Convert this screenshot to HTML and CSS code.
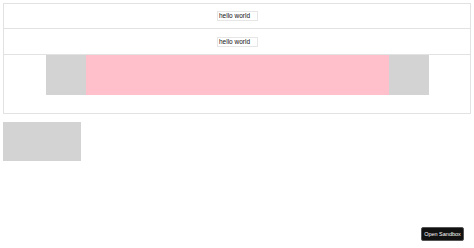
FILE: index.html
```html
<!DOCTYPE html>
<html>
<head>
<meta charset="utf-8">
<link rel="stylesheet" href="styles.css">
</head>
<body>
<div class="page">
  <div class="row first"><span class="field">hello world</span></div>
  <div class="row"><span class="field">hello world</span></div>
  <div class="strip-box">
    <div class="strip"><div class="pink"></div></div>
  </div>
  <div class="gray-box"></div>
</div>
<button class="sandbox">Open Sandbox</button>
</body>
</html>
```
FILE: styles.css
```css
html, body {
  margin: 0;
  padding: 0;
  background: #fff;
  font-family: "Liberation Sans", Arial, sans-serif;
}
.page {
  padding: 3px;
  width: 468px;
}
.row {
  height: 25px;
  border: 1px solid #e2e2e2;
  border-top: none;
  display: flex;
  align-items: center;
  justify-content: center;
}
.row.first {
  border-top: 1px solid #e2e2e2;
  height: 24px;
}
.field {
  box-sizing: border-box;
  width: 41px;
  height: 10px;
  border: 1px solid #e6e6e6;
  font-size: 6.5px;
  line-height: 8px;
  padding-left: 1px;
  color: #111;
  white-space: nowrap;
  overflow: hidden;
  margin-left: 1px;
}
.strip-box {
  border: 1px solid #e2e2e2;
  border-top: none;
  height: 58px;
  display: flex;
  justify-content: center;
}
.strip {
  width: 303px;
  height: 40px;
  padding: 0 40px;
  background: #d3d3d3;
}
.pink {
  height: 100%;
  background: #ffc0cb;
}
.gray-box {
  width: 78px;
  height: 39px;
  margin-top: 8px;
  background: #d3d3d3;
}
.sandbox {
  position: absolute;
  left: 421px;
  top: 227px;
  width: 43px;
  height: 14px;
  padding: 0;
  background: #111;
  color: #fff;
  border: 1px solid #555;
  border-radius: 2px;
  font-family: "Liberation Sans", Arial, sans-serif;
  font-size: 5.5px;
}
```
